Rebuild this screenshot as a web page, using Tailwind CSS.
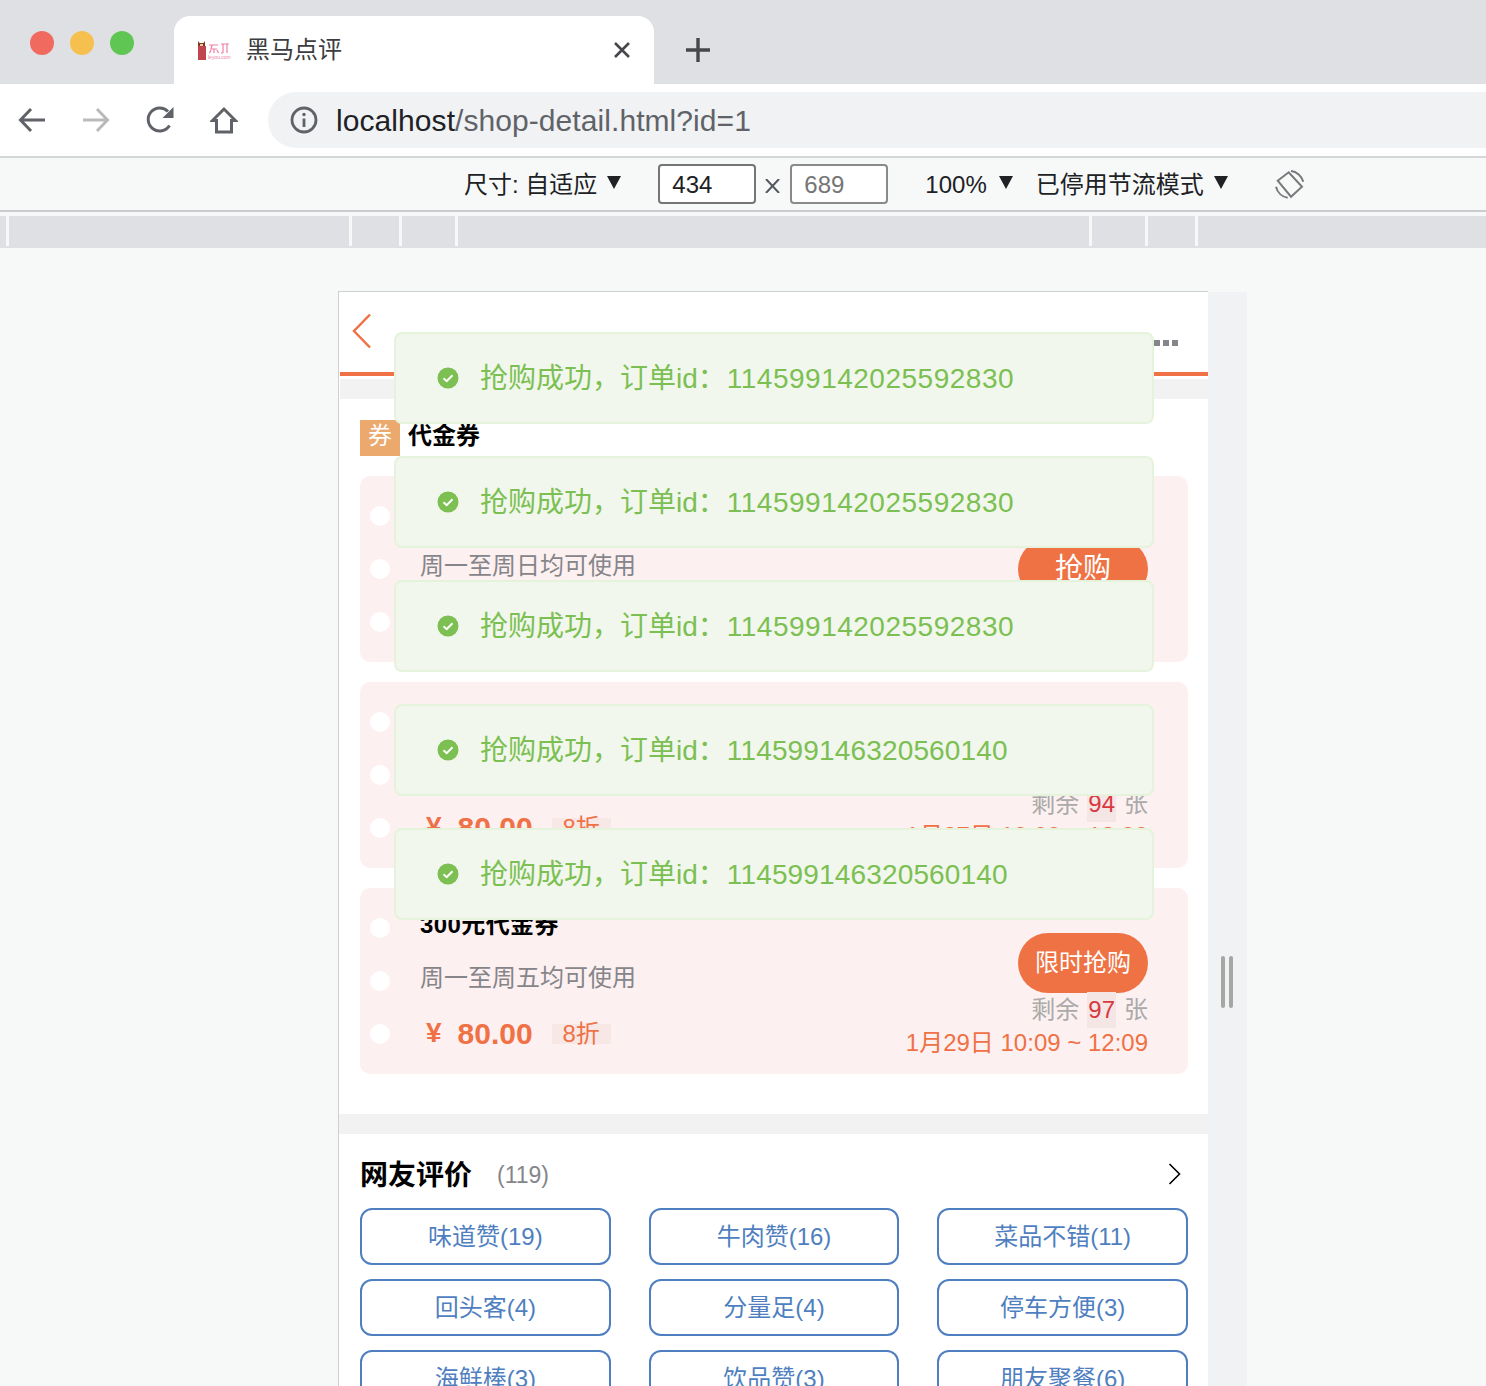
<!DOCTYPE html>
<html lang="zh-CN">
<head>
  <meta charset="UTF-8">
  <title>黑马点评</title>
  <script src="https://cdn.jsdelivr.net/npm/@tailwindcss/browser@4"></script>
</head>
<body class="relative h-[1386px] w-[1486px] overflow-hidden bg-[#f7f9f9] [font-family:'Liberation_Sans','Noto_Sans_CJK_SC',sans-serif]">

  <!-- tab strip -->
  <div class="flex h-[84px] items-end bg-[#dfe0e4] pl-[30px]">
    <div class="flex h-[84px] w-[144px] items-center gap-[16px] self-start pt-[2px]">
      <span class="h-[24px] w-[24px] rounded-full bg-[#f16a60]"></span>
      <span class="h-[24px] w-[24px] rounded-full bg-[#f6c04f]"></span>
      <span class="h-[24px] w-[24px] rounded-full bg-[#60c653]"></span>
    </div>
    <div class="flex h-[68px] w-[480px] items-center rounded-t-[16px] bg-white pl-[23px] pr-[22px]">
      <svg class="h-[20px] w-[34px]" viewBox="0 0 34 20" fill="none">
        <rect x="1" y="6" width="8" height="14" fill="#c0454f"/>
        <path d="M1 1l1.500 2h4L8 1v5H1z" fill="#7a3a22"/>
        <rect x="3" y="4" width="3" height="2" fill="#f2c9a8"/>
        <path d="M12 5h9M15 5l-1 4h6M17 9v4M14 10l-1.500 3M20 10l1.500 3M24 4h8M26 4v9M30 4v9M24 13h2" stroke="#ee7fa5" stroke-width="1.200"/>
        <text x="11" y="19" font-size="5" fill="#ee7fa5">leyou.com</text>
      </svg>
      <span class="ml-[15px] text-[24px] leading-[36px] text-[#3c3d40]">黑马点评</span>
      <svg class="ml-auto h-[20px] w-[20px]" viewBox="0 0 20 20" fill="none" stroke="#45474a" stroke-width="2.6">
        <path d="M3 3l14 14M17 3L3 17"/>
      </svg>
    </div>
    <svg class="ml-[31px] mb-[21px] h-[26px] w-[26px]" viewBox="0 0 26 26" fill="none" stroke="#45474a" stroke-width="3.4">
      <path d="M13 1v24M1 13h24"/>
    </svg>
  </div>

  <!-- address bar -->
  <div class="flex h-[72px] items-center bg-white pl-[18px]">
    <svg class="h-[28px] w-[28px]" viewBox="0 0 28 28" fill="none" stroke="#5f6368" stroke-width="3">
      <path d="M27 14H3M13 3L2.500 14 13 25"/>
    </svg>
    <svg class="ml-[36px] h-[28px] w-[28px]" viewBox="0 0 28 28" fill="none" stroke="#b9babc" stroke-width="3">
      <path d="M1 14h24M15 3l10.500 11L15 25"/>
    </svg>
    <svg class="ml-[36px] h-[28px] w-[28px]" viewBox="0 0 28 28" fill="none">
      <path d="M23.500 19.500A11.500 11.500 0 1 1 22 5.500" stroke="#5f6368" stroke-width="3"/>
      <path d="M27.500 1v11H16.500z" fill="#5f6368"/>
    </svg>
    <svg class="ml-[36px] h-[28px] w-[28px]" viewBox="0 0 28 28" fill="none" stroke="#5f6368" stroke-width="3">
      <path d="M2.500 14.500L14 3l11.500 11.500h-4V26h-15V14.500z"/>
    </svg>
    <div class="ml-[30px] flex h-[56px] flex-1 items-center rounded-l-[28px] bg-[#f1f2f4] pl-[22px]">
      <svg class="h-[28px] w-[28px]" viewBox="0 0 28 28" fill="none">
        <circle cx="14" cy="14" r="12" stroke="#5f6368" stroke-width="2.800"/>
        <path d="M14 12.500V21" stroke="#5f6368" stroke-width="2.800"/>
        <circle cx="14" cy="8.500" r="1.700" fill="#5f6368"/>
      </svg>
      <span class="ml-[18px] pt-px text-[30px] leading-[40px] tracking-[0.07px] text-[#202124]">localhost<span class="text-[#5f6368]">/shop-detail.html?id=1</span></span>
    </div>
  </div>

  <!-- device toolbar -->
  <div class="flex h-[56px] items-center border-y-2 border-t-[#d5d6d8] border-b-[#cbccd0] bg-[#f7f9f9] pl-[464px] text-[24px] text-[#202124]">
    <span class="pt-px">尺寸: 自适应</span>
    <span class="ml-[10px] mb-[3px] h-0 w-0 border-x-[7px] border-t-[13px] border-x-transparent border-t-[#202124]"></span>
    <span class="ml-[37px] flex h-[40px] w-[98px] items-center rounded-[4px] border-2 border-[#757575] bg-white pl-[12px] pt-px">434</span>
    <svg class="ml-[9px] mt-[4px] h-[14px] w-[15px]" viewBox="0 0 15 14" fill="none" stroke="#55585c" stroke-width="2">
      <path d="M1 0l13 14M14 0L1 14"/>
    </svg>
    <span class="ml-[10px] flex h-[40px] w-[98px] items-center rounded-[4px] border-2 border-[#8a8a8a] bg-white pl-[12px] pt-px text-[#757575]">689</span>
    <span class="ml-[37px] pt-px">100%</span>
    <span class="ml-[12px] mb-[3px] h-0 w-0 border-x-[7px] border-t-[13px] border-x-transparent border-t-[#202124]"></span>
    <span class="ml-[23px] pt-px">已停用节流模式</span>
    <span class="ml-[10px] mb-[3px] h-0 w-0 border-x-[7px] border-t-[13px] border-x-transparent border-t-[#202124]"></span>
    <svg class="ml-[48px] mt-px h-[28px] w-[28px] overflow-visible" viewBox="0 0 28 28" fill="none" stroke="#77797c" stroke-width="2">
      <path d="M1.700 9.700L12.700 1.300 26 15.700 15 25.700z"/>
      <path d="M15 0C20.500 .5 26 5 27.300 10.700M0 15.700C1.500 21.500 6 26 11.700 26.700"/>
    </svg>
  </div>

  <!-- ruler -->
  <div class="flex h-[36px] bg-[#f7f9f9] pt-[4px]">
    <div class="flex h-[32px] w-full bg-[#dfe0e4]">
      <i class="ml-[6px] h-[30px] w-[3px] bg-[#f7f9f9]"></i>
      <i class="ml-[340px] h-[30px] w-[3px] bg-[#f7f9f9]"></i>
      <i class="ml-[47px] h-[30px] w-[3px] bg-[#f7f9f9]"></i>
      <i class="ml-[53px] h-[30px] w-[3px] bg-[#f7f9f9]"></i>
      <i class="ml-[631px] h-[30px] w-[3px] bg-[#f7f9f9]"></i>
      <i class="ml-[53px] h-[30px] w-[3px] bg-[#f7f9f9]"></i>
      <i class="ml-[47px] h-[30px] w-[3px] bg-[#f7f9f9]"></i>
    </div>
  </div>

  <!-- emulated page -->
  <div class="flex pl-[338px] pt-[43px]">
    <div class="w-[870px] border-l border-t border-[#cfd0d2] bg-white">
      <div class="relative flex h-[80px] items-start pl-[13px] pt-[21px]">
        <svg class="h-[36px] w-[21px]" viewBox="0 0 21 36" fill="none" stroke="#ef7145" stroke-width="2.500">
          <path d="M18 1.500L2 18l16 16.500"/>
        </svg>
        <div class="ml-auto mr-[30px] mt-[27px] flex gap-[3px]">
          <i class="h-[6px] w-[6px] bg-[#85858a]"></i><i class="h-[6px] w-[6px] bg-[#85858a]"></i><i class="h-[6px] w-[6px] bg-[#85858a]"></i><i class="h-[6px] w-[6px] bg-[#85858a]"></i>
        </div>
      </div>
      <div class="ml-px h-[4px] bg-[#ef7145]"></div>
      <div class="ml-px mt-[3px] h-[20px] bg-[#f3f2f3]"></div>

      <!-- vouchers -->
      <div class="px-[21px] pr-[20px] pb-[40px] pt-[21px]">
        <div class="flex h-[36px] items-center">
          <span class="flex h-[36px] w-[40px] items-center justify-center bg-[#eba96d] pb-[4px] text-[24px] text-white">券</span>
          <span class="ml-[8px] pb-[4px] text-[24px] font-bold text-black">代金券</span>
        </div>

        <div class="mt-[20px] flex h-[186px] rounded-[10px] bg-[#fdf0f0]">
          <div class="ml-[10px] flex flex-col gap-[33px] pt-[30px]"><i class="h-[20px] w-[20px] rounded-full bg-white"></i><i class="h-[20px] w-[20px] rounded-full bg-white"></i><i class="h-[20px] w-[20px] rounded-full bg-white"></i></div>
          <div class="ml-[30px] flex-1">
            <div class="mt-[19px] text-[24px] font-bold leading-[36px] tracking-[0.4px] text-black">50元代金券</div>
            <div class="mt-[17px] text-[24px] leading-[36px] text-[#85858a]">周一至周日均可使用</div>
            <div class="mt-[19px] flex h-[36px] items-center text-[#ef7145]"><span class="ml-[6px] text-[28px] font-bold">¥</span><span class="ml-[16px] text-[30px] font-bold">50.00</span><span class="ml-[19px] mt-px flex h-[20px] w-[59px] items-center justify-center bg-[#f7e8e6] text-[24px] font-normal">9折</span></div>
          </div>
          <div class="mr-[40px] flex items-center">
            <span class="flex h-[60px] w-[130px] items-center justify-center rounded-full bg-[#ee7243] text-[28px] text-white">抢购</span>
          </div>
        </div>

        <div class="mt-[20px] flex h-[186px] rounded-[10px] bg-[#fdf0f0]">
          <div class="ml-[10px] flex flex-col gap-[33px] pt-[30px]"><i class="h-[20px] w-[20px] rounded-full bg-white"></i><i class="h-[20px] w-[20px] rounded-full bg-white"></i><i class="h-[20px] w-[20px] rounded-full bg-white"></i></div>
          <div class="ml-[30px] flex-1">
            <div class="mt-[19px] text-[24px] font-bold leading-[36px] tracking-[0.4px] text-black">100元代金券</div>
            <div class="mt-[17px] text-[24px] leading-[36px] text-[#85858a]">周一至周五均可使用</div>
            <div class="mt-[19px] flex h-[36px] items-center text-[#ef7145]"><span class="ml-[6px] text-[28px] font-bold">¥</span><span class="ml-[16px] text-[30px] font-bold">80.00</span><span class="ml-[19px] mt-px flex h-[20px] w-[59px] items-center justify-center bg-[#f7e8e6] text-[24px] font-normal">8折</span></div>
          </div>
          <div class="mr-[40px] flex flex-col items-end pt-[45px]">
            <span class="flex h-[60px] w-[130px] items-center justify-center rounded-full bg-[#ee7243] text-[24px] text-white">限时抢购</span>
            <div class="mt-[1px] flex h-[32px] items-center text-[24px] text-[#aaaaaa]">剩余<span class="mx-[8px] bg-[#f5e6e6] px-px text-[#d9383f]">94</span>张</div>
            <div class="-mt-px flex h-[34px] items-center text-[24px] text-[#ef7145]">1月27日 10:00 ~ 12:00</div>
          </div>
        </div>

        <div class="mt-[20px] flex h-[186px] rounded-[10px] bg-[#fdf0f0]">
          <div class="ml-[10px] flex flex-col gap-[33px] pt-[30px]"><i class="h-[20px] w-[20px] rounded-full bg-white"></i><i class="h-[20px] w-[20px] rounded-full bg-white"></i><i class="h-[20px] w-[20px] rounded-full bg-white"></i></div>
          <div class="ml-[30px] flex-1">
            <div class="mt-[19px] text-[24px] font-bold leading-[36px] tracking-[0.4px] text-black">300元代金券</div>
            <div class="mt-[17px] text-[24px] leading-[36px] text-[#85858a]">周一至周五均可使用</div>
            <div class="mt-[19px] flex h-[36px] items-center text-[#ef7145]"><span class="ml-[6px] text-[28px] font-bold">¥</span><span class="ml-[16px] text-[30px] font-bold">80.00</span><span class="ml-[19px] mt-px flex h-[20px] w-[59px] items-center justify-center bg-[#f7e8e6] text-[24px] font-normal">8折</span></div>
          </div>
          <div class="mr-[40px] flex flex-col items-end pt-[45px]">
            <span class="flex h-[60px] w-[130px] items-center justify-center rounded-full bg-[#ee7243] text-[24px] text-white">限时抢购</span>
            <div class="mt-[1px] flex h-[32px] items-center text-[24px] text-[#aaaaaa]">剩余<span class="mx-[8px] bg-[#f5e6e6] px-px text-[#d9383f]">97</span>张</div>
            <div class="flex h-[34px] items-center text-[24px] text-[#ef7145]">1月29日 10:09 ~ 12:09</div>
          </div>
        </div>
      </div>

      <div class="h-[20px] bg-[#f3f2f3]"></div>

      <!-- reviews -->
      <div class="pl-[21px] pr-[20px] pt-[20px]">
        <div class="flex h-[40px] items-center">
          <span class="pt-[3px] text-[28px] font-bold text-black">网友评价</span>
          <span class="ml-[25px] pt-[3px] text-[23px] text-[#85858a]">(119)</span>
          <svg class="ml-auto mr-[7px] h-[22px] w-[13px]" viewBox="0 0 13 22" fill="none" stroke="#000" stroke-width="1.600">
            <path d="M1.500 1L11.500 11 1.500 21"/>
          </svg>
        </div>
        <div class="mt-[14px] grid grid-cols-3 gap-x-[38px] gap-y-[14px] text-[24px] text-[#4f7fc0]">
          <div class="flex h-[57px] items-center justify-center rounded-[12px] border-2 border-[#4f7fc0]">味道赞(19)</div>
          <div class="flex h-[57px] items-center justify-center rounded-[12px] border-2 border-[#4f7fc0]">牛肉赞(16)</div>
          <div class="flex h-[57px] items-center justify-center rounded-[12px] border-2 border-[#4f7fc0]">菜品不错(11)</div>
          <div class="flex h-[57px] items-center justify-center rounded-[12px] border-2 border-[#4f7fc0]">回头客(4)</div>
          <div class="flex h-[57px] items-center justify-center rounded-[12px] border-2 border-[#4f7fc0]">分量足(4)</div>
          <div class="flex h-[57px] items-center justify-center rounded-[12px] border-2 border-[#4f7fc0]">停车方便(3)</div>
          <div class="flex h-[57px] items-center justify-center rounded-[12px] border-2 border-[#4f7fc0]">海鲜棒(3)</div>
          <div class="flex h-[57px] items-center justify-center rounded-[12px] border-2 border-[#4f7fc0]">饮品赞(3)</div>
          <div class="flex h-[57px] items-center justify-center rounded-[12px] border-2 border-[#4f7fc0]">朋友聚餐(6)</div>
        </div>
      </div>
    </div>

    <!-- scrollbar strip -->
    <div class="mt-px flex h-[1094px] w-[39px] items-start justify-center gap-[2px] bg-[#f1f2f4] pr-[2px] pt-[664px]">
      <i class="h-[52px] w-[4px] rounded-full bg-[#a6a6a6]"></i>
      <i class="ml-[2px] h-[52px] w-[4px] rounded-full bg-[#a6a6a6]"></i>
    </div>
  </div>

  <!-- success toasts stacked over the page -->
  <div class="absolute left-[394px] top-[332px] flex w-[760px] flex-col gap-[32px] text-[28px] text-[#7cbf52]">
    <div class="flex h-[92px] items-center gap-[21px] rounded-[8px] border-2 border-[#e5f3dc] bg-[#f1f7ec] pl-[41px]">
      <svg class="h-[22px] w-[22px]" viewBox="0 0 22 22"><circle cx="11" cy="11" r="10.500" fill="#7cbf52"/><path d="M6.500 11.200l3.200 3 5.800-6" fill="none" stroke="#fff" stroke-width="2"/></svg>
      <span class="pt-px">抢购成功，订单id：<span class="ml-px tracking-[0.5px]">114599142025592830</span></span>
    </div>
    <div class="flex h-[92px] items-center gap-[21px] rounded-[8px] border-2 border-[#e5f3dc] bg-[#f1f7ec] pl-[41px]">
      <svg class="h-[22px] w-[22px]" viewBox="0 0 22 22"><circle cx="11" cy="11" r="10.500" fill="#7cbf52"/><path d="M6.500 11.200l3.200 3 5.800-6" fill="none" stroke="#fff" stroke-width="2"/></svg>
      <span class="pt-px">抢购成功，订单id：<span class="ml-px tracking-[0.5px]">114599142025592830</span></span>
    </div>
    <div class="flex h-[92px] items-center gap-[21px] rounded-[8px] border-2 border-[#e5f3dc] bg-[#f1f7ec] pl-[41px]">
      <svg class="h-[22px] w-[22px]" viewBox="0 0 22 22"><circle cx="11" cy="11" r="10.500" fill="#7cbf52"/><path d="M6.500 11.200l3.200 3 5.800-6" fill="none" stroke="#fff" stroke-width="2"/></svg>
      <span class="pt-px">抢购成功，订单id：<span class="ml-px tracking-[0.5px]">114599142025592830</span></span>
    </div>
    <div class="flex h-[92px] items-center gap-[21px] rounded-[8px] border-2 border-[#e5f3dc] bg-[#f1f7ec] pl-[41px]">
      <svg class="h-[22px] w-[22px]" viewBox="0 0 22 22"><circle cx="11" cy="11" r="10.500" fill="#7cbf52"/><path d="M6.500 11.200l3.200 3 5.800-6" fill="none" stroke="#fff" stroke-width="2"/></svg>
      <span class="pt-px">抢购成功，订单id：<span class="ml-px tracking-[0.15px]">114599146320560140</span></span>
    </div>
    <div class="flex h-[92px] items-center gap-[21px] rounded-[8px] border-2 border-[#e5f3dc] bg-[#f1f7ec] pl-[41px]">
      <svg class="h-[22px] w-[22px]" viewBox="0 0 22 22"><circle cx="11" cy="11" r="10.500" fill="#7cbf52"/><path d="M6.500 11.200l3.200 3 5.800-6" fill="none" stroke="#fff" stroke-width="2"/></svg>
      <span class="pt-px">抢购成功，订单id：<span class="ml-px tracking-[0.15px]">114599146320560140</span></span>
    </div>
  </div>
</body>
</html>
